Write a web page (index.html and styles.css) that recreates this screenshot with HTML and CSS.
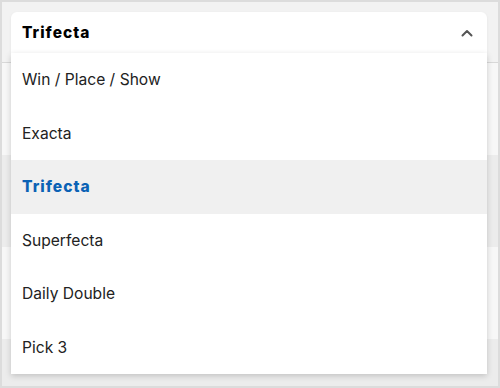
FILE: index.html
```html
<!DOCTYPE html>
<html>
<head>
<meta charset="utf-8">
<link rel="stylesheet" href="styles.css">
</head>
<body>
<div class="frame">
  <div class="backdrop">
    <div class="bd-top"></div>
    <div class="bd-row light"></div>
    <div class="bd-row dark"></div>
    <div class="bd-row light"></div>
    <div class="bd-row dark last"></div>
  </div>
  <div class="select">
    <div class="select-head">
      <span class="select-value">Trifecta</span>
      <svg class="chev" width="12" height="8" viewBox="0 0 12 8"><path d="M1.5 6.5 L6 2 L10.5 6.5" fill="none" stroke="#555" stroke-width="2" stroke-linecap="round" stroke-linejoin="round"/></svg>
    </div>
    <ul class="menu">
      <li class="opt">Win / Place / Show</li>
      <li class="opt">Exacta</li>
      <li class="opt selected">Trifecta</li>
      <li class="opt">Superfecta</li>
      <li class="opt">Daily Double</li>
      <li class="opt">Pick 3</li>
    </ul>
  </div>
</div>
</body>
</html>
```

FILE: styles.css
```css
html, body {
  margin: 0;
  padding: 0;
}
body {
  width: 500px;
  height: 388px;
  overflow: hidden;
  font-family: Inter, "Liberation Sans", sans-serif;
}
.frame {
  position: relative;
  box-sizing: border-box;
  width: 500px;
  height: 388px;
  border: 2px solid #dcdcdc;
  background: #f2f2f2;
  overflow: hidden;
}
.backdrop {
  display: flex;
  flex-direction: column;
  height: 100%;
}
.bd-top {
  height: 60px;
  border-bottom: 1px solid #d8d8d8;
}
.bd-row {
  height: 92px;
}
.bd-row.light { background: #f7f7f7; }
.bd-row.dark { background: #ececec; }
.bd-row.last { flex: 1; }
.select {
  position: absolute;
  left: 9px;
  top: 10px;
  width: 476px;
}
.select-head {
  height: 41px;
  background: #fff;
  border-radius: 6px 6px 0 0;
  display: flex;
  align-items: center;
  justify-content: space-between;
  padding: 0 14px 0 11px;
  box-shadow: 0 1px 3px rgba(0,0,0,0.06);
}
.select-value {
  font-size: 15.5px;
  font-weight: 800;
  letter-spacing: 1px;
  color: #000;
}
.chev { display: block; }
.menu {
  list-style: none;
  margin: 0;
  padding: 0;
  background: #fff;
  box-shadow: 0 2px 6px rgba(0,0,0,0.18);
}
.opt {
  height: 53.5px;
  display: flex;
  align-items: center;
  padding-left: 11px;
  font-size: 15.6px;
  color: #222;
}
.opt.selected {
  background: #f0f0f0;
  color: #0b62b5;
  font-weight: 800;
  letter-spacing: 1px;
}
```
